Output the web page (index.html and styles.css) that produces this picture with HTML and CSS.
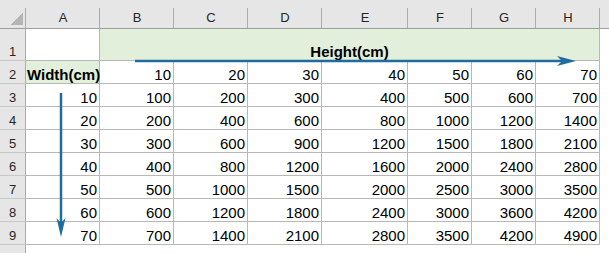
FILE: index.html
```html
<!DOCTYPE html>
<html>
<head>
<meta charset="utf-8">
<link rel="stylesheet" href="styles.css">
</head>
<body>
<div class="sheet">
  <div class="grid">
    <div class="ch corner"><span class="tri"></span></div>
    <div class="ch">A</div><div class="ch">B</div><div class="ch">C</div><div class="ch">D</div>
    <div class="ch">E</div><div class="ch">F</div><div class="ch">G</div><div class="ch">H</div>
    <div class="ch fill"></div>

    <div class="rh">1</div>
    <div class="c"></div>
    <div class="c green merged">Height(cm)</div>
    <div class="f"></div>

    <div class="rh">2</div>
    <div class="c green bold left">Width(cm)</div>
    <div class="c">10</div><div class="c">20</div><div class="c">30</div><div class="c">40</div><div class="c">50</div><div class="c">60</div><div class="c">70</div>
    <div class="f"></div>

    <div class="rh">3</div>
    <div class="c">10</div><div class="c">100</div><div class="c">200</div><div class="c">300</div><div class="c">400</div><div class="c">500</div><div class="c">600</div><div class="c">700</div>
    <div class="f"></div>

    <div class="rh">4</div>
    <div class="c">20</div><div class="c">200</div><div class="c">400</div><div class="c">600</div><div class="c">800</div><div class="c">1000</div><div class="c">1200</div><div class="c">1400</div>
    <div class="f"></div>

    <div class="rh">5</div>
    <div class="c">30</div><div class="c">300</div><div class="c">600</div><div class="c">900</div><div class="c">1200</div><div class="c">1500</div><div class="c">1800</div><div class="c">2100</div>
    <div class="f"></div>

    <div class="rh">6</div>
    <div class="c">40</div><div class="c">400</div><div class="c">800</div><div class="c">1200</div><div class="c">1600</div><div class="c">2000</div><div class="c">2400</div><div class="c">2800</div>
    <div class="f"></div>

    <div class="rh">7</div>
    <div class="c">50</div><div class="c">500</div><div class="c">1000</div><div class="c">1500</div><div class="c">2000</div><div class="c">2500</div><div class="c">3000</div><div class="c">3500</div>
    <div class="f"></div>

    <div class="rh">8</div>
    <div class="c">60</div><div class="c">600</div><div class="c">1200</div><div class="c">1800</div><div class="c">2400</div><div class="c">3000</div><div class="c">3600</div><div class="c">4200</div>
    <div class="f"></div>

    <div class="rh">9</div>
    <div class="c">70</div><div class="c">700</div><div class="c">1400</div><div class="c">2100</div><div class="c">2800</div><div class="c">3500</div><div class="c">4200</div><div class="c">4900</div>
    <div class="f"></div>

    <div class="rh">10</div>
    <div class="e"></div><div class="e"></div><div class="e"></div><div class="e"></div><div class="e"></div><div class="e"></div><div class="e"></div><div class="e"></div>
    <div class="f"></div>
  </div>

  <svg class="arrows" width="609" height="253" viewBox="0 0 609 253" xmlns="http://www.w3.org/2000/svg">
    <line x1="135" y1="61" x2="566" y2="61" stroke="#1f6c9e" stroke-width="2.5"/>
    <polygon points="576,61 557,56 562,61 557,66" fill="#1f6c9e"/>
    <line x1="61" y1="93" x2="61" y2="227" stroke="#1f6c9e" stroke-width="2.5"/>
    <polygon points="61,237 56.5,218 61,223 65.5,218" fill="#1f6c9e"/>
  </svg>
</div>
</body>
</html>
```

FILE: styles.css
```css
html, body {
  margin: 0;
  padding: 0;
  background: #ffffff;
}

.sheet {
  position: relative;
  width: 609px;
  height: 253px;
  overflow: hidden;
  font-family: "Liberation Sans", Arial, sans-serif;
}

.grid {
  display: grid;
  grid-template-columns: 26px 74px 74px 74px 74px 86px 64px 64px 64px 1fr;
  grid-template-rows: 29px 32px repeat(9, 23px);
}

.ch {
  box-sizing: border-box;
  background: #e6e6e6 linear-gradient(#ababab, #ababab) right bottom / 1px 20px no-repeat;
  border-bottom: 1px solid #9e9e9e;
  display: flex;
  align-items: flex-end;
  justify-content: center;
  padding-bottom: 3px;
  font-size: 13px;
  line-height: 15px;
  color: #262626;
}

.ch.fill {
  background: #e6e6e6;
}

.corner {
  justify-content: flex-end;
  padding: 0 3px 3px 0;
}

.tri {
  width: 12px;
  height: 12px;
  background: linear-gradient(to bottom right, transparent 50%, #b5b5b5 50%);
}

.rh {
  box-sizing: border-box;
  background: #e6e6e6;
  border-right: 1px solid #ababab;
  border-bottom: 1px solid #c8c8c8;
  display: flex;
  align-items: flex-end;
  justify-content: center;
  padding-bottom: 1px;
  font-size: 13px;
  line-height: 15px;
  color: #262626;
}

.c {
  box-sizing: border-box;
  border-right: 1px solid #b8b8b8;
  border-bottom: 1px solid #b8b8b8;
  display: flex;
  align-items: flex-end;
  justify-content: flex-end;
  padding: 0 2px 0 2px;
  font-size: 15px;
  line-height: 17px;
  color: #000000;
  white-space: nowrap;
}

.green {
  background: #e2efda;
}

.merged {
  grid-column: span 7;
  justify-content: center;
  font-weight: bold;
}

.bold {
  font-weight: bold;
}

.left {
  justify-content: flex-start;
  padding-left: 1px;
}

.f,
.e {
  background: #ffffff;
}

.arrows {
  position: absolute;
  left: 0;
  top: 0;
  pointer-events: none;
}
```
